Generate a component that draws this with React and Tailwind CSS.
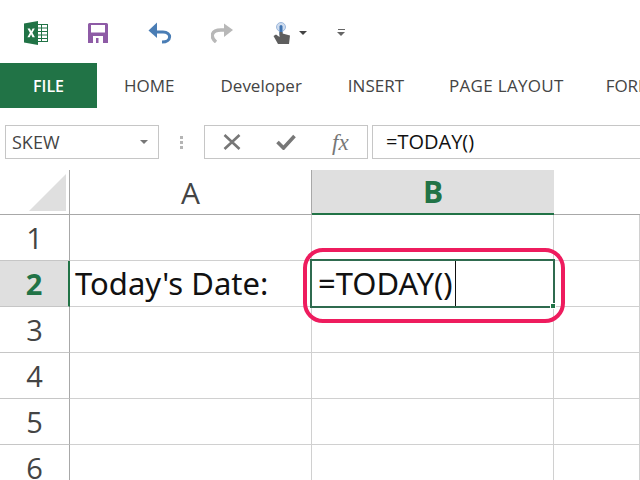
import React from "react";

const ui = { fontFamily: '"Open Sans", "Noto Sans", sans-serif' };

const ExcelIcon = () => (
  <svg width="24" height="24" viewBox="0 0 24 24">
    <rect x="10" y="3.5" width="13.5" height="17" fill="#fff" stroke="#217346" strokeWidth="1" />
    <path d="M12 7h11M12 10.5h11M12 14h11M12 17.5h11M17.5 3.5v17" stroke="#217346" strokeWidth="1" fill="none" />
    <path d="M0 2.5 L14 0 V24 L0 21.5 Z" fill="#217346" />
    <path d="M3.5 7.5h2.4l1.3 2.8 1.4-2.8h2.2l-2.4 4.3 2.5 4.5H8.5l-1.4-3-1.4 3H3.4l2.5-4.5Z" fill="#fff" />
  </svg>
);

const SaveIcon = () => (
  <svg width="20" height="20" viewBox="0 0 20 20">
    <path d="M0 1.5 A1.5 1.5 0 0 1 1.5 0 H18.5 A1.5 1.5 0 0 1 20 1.5 V20 H0 Z" fill="#8e5ba6" />
    <rect x="3" y="2" width="14" height="7.5" fill="#fff" />
    <rect x="5" y="13" width="10" height="7" fill="#fff" />
    <rect x="8" y="15" width="2.5" height="5" fill="#8e5ba6" />
  </svg>
);

const UndoIcon = ({ color }) => (
  <svg width="24" height="22" viewBox="0 0 24 22">
    <path d="M7 10 H15 C24 10 24 20 14 20" fill="none" stroke={color} strokeWidth="3" />
    <path d="M0.5 8.5 L9 0.5 V16 Z" fill={color} />
  </svg>
);

const RedoIcon = ({ color }) => (
  <svg width="22" height="20" viewBox="0 0 22 20">
    <path d="M15 7 H10 C0 7 -1 14 5 19" fill="none" stroke={color} strokeWidth="3.4" />
    <path d="M13 0.5 L22 7 L13 14 Z" fill={color} />
  </svg>
);

const TouchIcon = () => (
  <svg width="18" height="22" viewBox="0 0 18 22">
    <circle cx="8" cy="5" r="4.5" fill="#cfdcee" stroke="#9db8dc" strokeWidth="1" />
    <rect x="6.5" y="3" width="3" height="11" rx="1.5" fill="#3f73b0" />
    <path d="M6.5 10 V15 L3 12.5 L0.5 14 L5 22 H16 L17 13.5 L9.5 11.5 V10 Z" fill="#5e5e5e" />
  </svg>
);

const Tab = ({ children, className }) => (
  <span className={`shrink-0 text-[17px] text-[#444444] ${className}`}>{children}</span>
);

const RowHead = ({ n, active }) => (
  <div
    className={`h-[46px] flex items-center justify-center border-b text-[29px] ${
      active ? "bg-[#dfdfdf] border-[#c6c6c6] border-r-2 border-r-[#217346] text-[#217346] font-bold" : "border-[#c6c6c6] border-r border-r-[#a8a8a8] text-[#444444]"
    }`}
  >
    {n}
  </div>
);

const Cell = ({ children }) => (
  <div className="h-[46px] border-b border-r border-[#d0d0d0] flex items-center whitespace-nowrap overflow-visible">{children}</div>
);

export default function App() {
  const rows = [1, 2, 3, 4, 5, 6];
  return (
    <div className="w-[640px] h-[480px] bg-white overflow-hidden relative" style={ui}>
      <div className="h-[63px] flex items-center pt-[2px]">
        <div className="ml-[24px]"><ExcelIcon /></div>
        <div className="ml-[40px]"><SaveIcon /></div>
        <div className="ml-[40px]"><UndoIcon color="#4a7db5" /></div>
        <div className="ml-[39px]"><RedoIcon color="#b8b8b8" /></div>
        <div className="ml-[40px] flex items-center gap-[8px]">
          <TouchIcon />
          <span className="w-0 h-0 border-x-[4px] border-x-transparent border-t-[4px] border-t-[#444444]" />
        </div>
        <div className="ml-[30px] flex flex-col items-center gap-[2px]">
          <span className="w-[7px] h-px bg-[#666666]" />
          <span className="w-0 h-0 border-x-[4px] border-x-transparent border-t-[4px] border-t-[#666666]" />
        </div>
      </div>

      <div className="h-[45px] flex items-center whitespace-nowrap">
        <div className="w-[97px] shrink-0 h-full bg-[#217346] text-white text-[16px] font-semibold flex items-center justify-center">FILE</div>
        <Tab className="ml-[27px]">HOME</Tab>
        <Tab className="ml-[46px]">Developer</Tab>
        <Tab className="ml-[46px]">INSERT</Tab>
        <Tab className="ml-[45px] tracking-[0.3px]">PAGE LAYOUT</Tab>
        <Tab className="ml-[42px]">FORMULAS</Tab>
      </div>

      <div className="h-[34px] mt-[17px] flex items-stretch">
        <div className="ml-[5px] w-[154px] border border-[#c6c6c6] flex items-center justify-between pl-[6px] pr-[10px]">
          <span className="text-[18px] text-[#444444]">SKEW</span>
          <span className="w-0 h-0 border-x-[4px] border-x-transparent border-t-[4px] border-t-[#777777]" />
        </div>
        <div className="w-[45px] flex flex-col items-center justify-center gap-[2px]">
          <span className="w-[3px] h-[3px] bg-[#b5b5b5]" />
          <span className="w-[3px] h-[3px] bg-[#b5b5b5]" />
          <span className="w-[3px] h-[3px] bg-[#b5b5b5]" />
        </div>
        <div className="w-[164px] border border-[#c6c6c6] flex items-center pl-[18px]">
          <svg width="18" height="16" viewBox="0 0 18 16"><path d="M1.5 1 L16.5 15 M16.5 1 L1.5 15" stroke="#777777" strokeWidth="2.6" fill="none" /></svg>
          <svg className="ml-[35px]" width="20" height="16" viewBox="0 0 20 16"><path d="M1.5 8 L7.5 14 L18.5 2" stroke="#777777" strokeWidth="3.6" fill="none" /></svg>
          <span className="ml-[36px] text-[23px] italic font-medium text-[#777777] leading-none" style={{ fontFamily: '"Liberation Serif", serif' }}>fx</span>
        </div>
        <div className="ml-[4px] flex-1 border-y border-l border-[#c6c6c6] flex items-center pl-[13px] text-[20px] text-[#111111]">=TODAY()</div>
      </div>

      <div className="mt-[11px] grid grid-cols-[70px_242px_242px_1fr]">
        <div className="h-[45px] border-b border-r border-[#a8a8a8] relative flex items-end justify-end pr-[3px] pb-[3px]">
          <svg width="37" height="37" viewBox="0 0 37 37"><path d="M37 0 V37 H0 Z" fill="#dfdfdf" /></svg>
        </div>
        <div className="h-[45px] border-b border-r border-[#a8a8a8] flex items-center justify-center text-[30px] text-[#444444]">A</div>
        <div className="h-[45px] bg-[#dfdfdf] border-b-2 border-[#217346] flex items-center justify-center text-[30px] font-bold text-[#217346]">B</div>
        <div className="h-[45px] border-b border-[#a8a8a8]" />
        {rows.map((n) => (
          <React.Fragment key={n}>
            <RowHead n={n} active={n === 2} />
            <Cell>
              {n === 2 && <span className="ml-[5px] text-[31px] text-[#111111]" style={{ fontFamily: '"Noto Sans", sans-serif' }}>Today's Date:</span>}
            </Cell>
            <Cell />
            <Cell />
          </React.Fragment>
        ))}
      </div>

      {/* selected cell and the red callout lie over the grid */}
      <div className="absolute left-[310px] top-[259px] w-[245px] h-[49px] border-2 border-[#2f6b4f] flex items-center pl-[6px] text-[31px] text-[#111111] whitespace-nowrap" style={{ fontFamily: '"Noto Sans", sans-serif' }}>
        =TODAY()
        <span className="absolute left-[143px] top-0 w-px h-full bg-[#111111]" />
        <span className="absolute right-[-3px] bottom-[-3px] w-[6px] h-[6px] bg-[#217346] border border-white" />
      </div>
      <div className="absolute left-[303px] top-[248px] w-[262px] h-[75px] border-[4px] border-[#ee1c5e] rounded-[20px]" />
    </div>
  );
}
